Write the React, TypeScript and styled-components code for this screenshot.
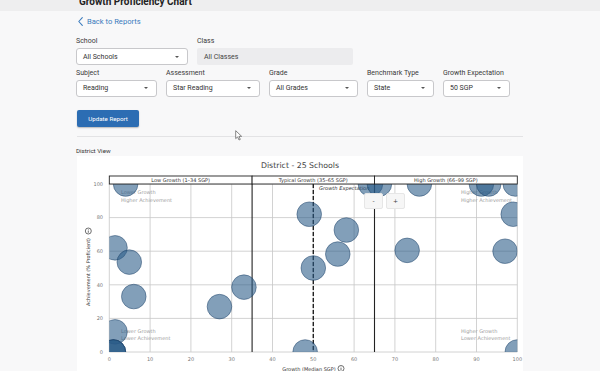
import React from 'react';
import styled, { createGlobalStyle } from 'styled-components';

const GlobalStyle = createGlobalStyle`
  html, body { margin: 0; padding: 0; background: #f8f8f9; overflow: hidden; }
  body { font-family: Roboto, "Liberation Sans", Arial, sans-serif; color: #333; }
  * { box-sizing: border-box; }
`;

const Page = styled.div`
  position: relative;
  width: 600px;
  height: 371px;
  overflow: hidden;
`;

const TopBar = styled.header`
  height: 11px;
  background: #eeeeef;
  padding-left: 79px;
  overflow: hidden;
`;

const PageTitle = styled.h1`
  margin: -3px 0 0;
  font-size: 10px;
  line-height: 10px;
  font-weight: 700;
  color: #222;
`;

const Content = styled.main`
  padding: 0 77px 0 76px;
  display: flex;
  flex-direction: column;
`;

const BackLink = styled.a`
  margin-top: 4px;
  height: 12px;
  display: flex;
  align-items: center;
  gap: 4px;
  padding-left: 2px;
  color: #3b7bbd;
  font-size: 7.6px;
  text-decoration: none;
`;

const FormRow = styled.div<{ $top: number }>`
  margin-top: ${(p) => p.$top}px;
  display: flex;
  gap: 9px;
`;

const Field = styled.div<{ $w: number }>`
  width: ${(p) => p.$w}px;
  display: flex;
  flex-direction: column;
  gap: 3px;
`;

const Label = styled.label`
  font-size: 7px;
  line-height: 8px;
  color: #3a3a3a;
  white-space: nowrap;
`;

const SelectBox = styled.div<{ $disabled?: boolean }>`
  height: 17px;
  border: 1px solid ${(p) => (p.$disabled ? 'transparent' : '#c8c8cb')};
  border-radius: ${(p) => (p.$disabled ? 2 : 3)}px;
  background: ${(p) => (p.$disabled ? '#ececee' : '#fff')};
  display: flex;
  align-items: center;
  justify-content: space-between;
  padding: 0 8px 0 6px;
  font-size: 7px;
  color: ${(p) => (p.$disabled ? '#444' : '#333')};
  white-space: nowrap;
`;

const Caret = styled.span`
  width: 0;
  height: 0;
  border-left: 2px solid transparent;
  border-right: 2px solid transparent;
  border-top: 2.5px solid #555;
`;

const UpdateButton = styled.button`
  margin: 13.5px 0 0 1px;
  align-self: flex-start;
  width: 62px;
  height: 17px;
  background: #2c6db3;
  color: #fff;
  border: none;
  border-radius: 2px;
  font-family: Roboto, "Liberation Sans", Arial, sans-serif;
  font-size: 6.2px;
  font-weight: 400;
  padding: 0;
  box-shadow: 0 1px 1.5px rgba(0, 0, 0, 0.25);
`;

const Divider = styled.hr`
  margin: 9px 0 0 1px;
  border: none;
  height: 1px;
  background: #e3e3e5;
`;

const SectionLabel = styled.div`
  margin-top: 10px;
  font-size: 6.2px;
  line-height: 8px;
  font-weight: 400;
  color: #333;
`;

const ChartPanel = styled.div`
  position: relative;
  margin: 1px 0 0 1px;
  width: 446px;
  height: 215px;
  background: #fff;
`;

const ChartSvg = styled.svg`
  display: block;
  font-family: "DejaVu Sans", Verdana, sans-serif;
`;

const ZoomControls = styled.div`
  position: absolute;
  left: 287px;
  top: 37px;
  display: flex;
  gap: 3px;
`;

const ZoomButton = styled.button`
  width: 19px;
  height: 16px;
  padding: 0;
  background: #f6f6f6;
  border: 1px solid #e6e6e6;
  border-radius: 2px;
  color: #444;
  font-family: "DejaVu Sans", Verdana, sans-serif;
  font-size: 6px;
  line-height: 14px;
`;

const Cursor = styled.svg`
  position: absolute;
  left: 235px;
  top: 130px;
`;

const X = (v: number) => 109.3 + v * 4.08;
const Y = (v: number) => 352 - v * 1.68;

const bubbles: [number, number][] = [
  [4, 100], [1.4, 62], [4.9, 53.5], [6, 33], [27, 27], [33, 38.6], [1.4, 12],
  [1, 0], [1, 0], [1, 0],
  [49, 82], [56, 58.3], [58.1, 72.6], [50, 50], [48, 0],
  [64, 100], [66.2, 100], [76, 100], [73, 60.5],
  [91.2, 100], [93, 100], [99.5, 100], [99, 82], [97, 60], [100, 0],
];

const xTicks = [0, 10, 20, 30, 40, 50, 60, 70, 80, 90, 100];
const yTicks = [0, 20, 40, 60, 80, 100];

const bands = [
  { from: 0, to: 35, label: 'Low Growth (1–34 SGP)' },
  { from: 35, to: 65, label: 'Typical Growth (35–65 SGP)' },
  { from: 65, to: 100, label: 'High Growth (66–99 SGP)' },
];

const InfoIcon = ({ cx, cy }: { cx: number; cy: number }) => (
  <g>
    <circle cx={cx} cy={cy} r={3} fill="none" stroke="#333" strokeWidth={0.7} />
    <circle cx={cx} cy={cy - 1.4} r={0.45} fill="#333" />
    <line x1={cx} y1={cy - 0.5} x2={cx} y2={cy + 1.8} stroke="#333" strokeWidth={0.7} />
  </g>
);

const fields1 = [
  { label: 'School', value: 'All Schools', w: 112 },
  { label: 'Class', value: 'All Classes', w: 156, disabled: true },
];
const fields2 = [
  { label: 'Subject', value: 'Reading', w: 81 },
  { label: 'Assessment', value: 'Star Reading', w: 94 },
  { label: 'Grade', value: 'All Grades', w: 89 },
  { label: 'Benchmark Type', value: 'State', w: 67 },
  { label: 'Growth Expectation', value: '50 SGP', w: 67 },
];

type F = { label: string; value: string; w: number; disabled?: boolean };

const FieldItem = ({ f }: { f: F }) => (
  <Field $w={f.w}>
    <Label>{f.label}</Label>
    <SelectBox $disabled={f.disabled}>
      <span>{f.value}</span>
      {!f.disabled && <Caret />}
    </SelectBox>
  </Field>
);

const Chart = () => {
  const left = X(0);
  const right = X(100);
  const top = Y(100);
  const bottom = Y(0);
  return (
    <ChartSvg width={446} height={215} viewBox="77 156 446 215">
      <defs>
        <clipPath id="plot">
          <rect x={left} y={top} width={right - left} height={bottom - top} />
        </clipPath>
      </defs>
      <text x={300} y={167.5} textAnchor="middle" fontSize={7.8} fill="#444">
        District - 25 Schools
      </text>
      {xTicks.map((t) => (
        <line key={'gx' + t} x1={X(t)} x2={X(t)} y1={top} y2={bottom} stroke="#c6c6c6" strokeWidth={0.8} />
      ))}
      {yTicks.map((t) => (
        <line key={'gy' + t} x1={left} x2={right} y1={Y(t)} y2={Y(t)} stroke="#c6c6c6" strokeWidth={0.8} />
      ))}
      {yTicks.map((t) => (
        <text key={'ty' + t} x={103} y={Y(t) + 1.8} textAnchor="end" fontSize={5} fill="#777">
          {t}
        </text>
      ))}
      {xTicks.map((t) => (
        <text key={'tx' + t} x={X(t)} y={361} textAnchor="middle" fontSize={5} fill="#777">
          {t}
        </text>
      ))}
      <g fontSize={5} fill="#a0a0a0">
        <text x={121} y={194}>Lower Growth</text>
        <text x={121} y={202}>Higher Achievement</text>
        <text x={461} y={194}>Higher Growth</text>
        <text x={461} y={202}>Higher Achievement</text>
        <text x={121} y={332.5}>Lower Growth</text>
        <text x={121} y={340}>Lower Achievement</text>
        <text x={461} y={332.5}>Higher Growth</text>
        <text x={461} y={340}>Lower Achievement</text>
      </g>
      <line x1={X(35)} x2={X(35)} y1={top} y2={bottom} stroke="#222" strokeWidth={1.1} />
      <line x1={X(65)} x2={X(65)} y1={top} y2={bottom} stroke="#222" strokeWidth={1.1} />
      <line x1={X(50)} x2={X(50)} y1={top} y2={bottom} stroke="#222" strokeWidth={1.4} strokeDasharray="4 2" />
      <text x={319} y={190} fontSize={5.1} fontStyle="italic" fill="#333">
        Growth Expectation
      </text>
      <g clipPath="url(#plot)">
        {bubbles.map(([bx, by], i) => (
          <circle
            key={i}
            cx={X(bx)}
            cy={Y(by)}
            r={12.3}
            fill="rgba(40, 90, 135, 0.58)"
            stroke="rgba(28, 66, 105, 0.7)"
            strokeWidth={0.7}
          />
        ))}
      </g>
      {bands.map((b) => (
        <g key={b.label}>
          <rect x={X(b.from)} y={176} width={X(b.to) - X(b.from)} height={8} fill="#fff" stroke="#222" strokeWidth={0.9} />
          <text x={(X(b.from) + X(b.to)) / 2} y={182.2} textAnchor="middle" fontSize={5} fill="#333">
            {b.label}
          </text>
        </g>
      ))}
      <text x={309} y={370.5} textAnchor="middle" fontSize={5} fill="#333">
        Growth (Median SGP)
      </text>
      <InfoIcon cx={341} cy={368.5} />
      <g transform="translate(90 272) rotate(-90)">
        <text x={0} y={0} textAnchor="middle" fontSize={5} fill="#333">
          Achievement (% Proficient)
        </text>
      </g>
      <InfoIcon cx={88.3} cy={231} />
    </ChartSvg>
  );
};

export default function App() {
  return (
    <Page>
      <GlobalStyle />
      <TopBar>
        <PageTitle>Growth Proficiency Chart</PageTitle>
      </TopBar>
      <Content>
        <BackLink href="#">
          <svg width="5" height="9" viewBox="0 0 5 9">
            <path d="M4.3 0.6 L0.8 4.5 L4.3 8.4" fill="none" stroke="#3b7bbd" strokeWidth="1.1" strokeLinecap="round" strokeLinejoin="round" />
          </svg>
          <span>Back to Reports</span>
        </BackLink>
        <FormRow $top={10}>
          {fields1.map((f) => (
            <FieldItem key={f.label} f={f} />
          ))}
        </FormRow>
        <FormRow $top={3.5}>
          {fields2.map((f) => (
            <FieldItem key={f.label} f={f} />
          ))}
        </FormRow>
        <UpdateButton>Update Report</UpdateButton>
        <Divider />
        <SectionLabel>District View</SectionLabel>
        <ChartPanel>
          <Chart />
          <ZoomControls>
            <ZoomButton>-</ZoomButton>
            <ZoomButton>+</ZoomButton>
          </ZoomControls>
        </ChartPanel>
      </Content>
      <Cursor width="8" height="11" viewBox="0 0 8 11">
        <path d="M0.7 0.7 L0.7 8.6 L2.6 6.9 L4 10 L5.3 9.4 L3.9 6.4 L6.6 6.3 Z" fill="#fff" stroke="#555" strokeWidth="0.7" strokeLinejoin="round" />
      </Cursor>
    </Page>
  );
}
